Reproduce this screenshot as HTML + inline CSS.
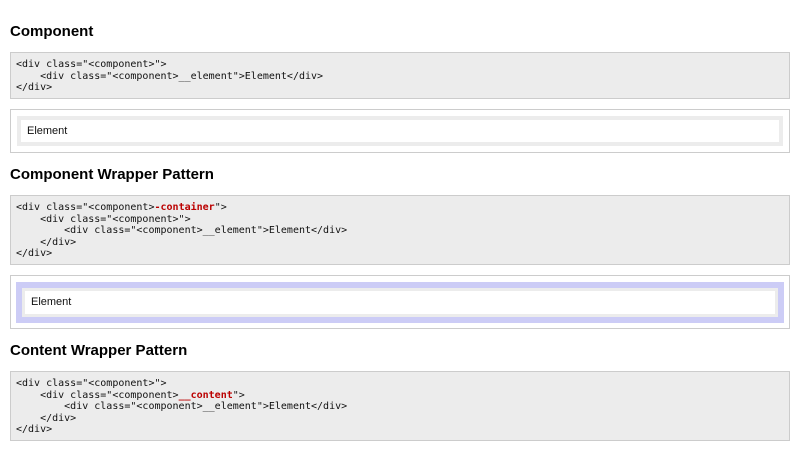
<!DOCTYPE html>
<html><head><style>
body{margin:0;background:#fff;width:800px;height:450px;position:relative;font-family:"Liberation Sans",sans-serif;overflow:hidden}
h2{position:absolute;left:10px;margin:0;font-size:15px;font-weight:bold;color:#000}
.code{position:absolute;left:10px;width:780px;background:#ececec;border:1px solid #ccc;font-family:"DejaVu Sans Mono",monospace;font-size:10px;line-height:11.5px;padding:6px 5px;box-sizing:border-box;white-space:pre;color:#111}
.code b{color:#b00;font-weight:bold}
.demo{position:absolute;left:10px;width:780px;border:1px solid #ccc;box-sizing:border-box}
.el{font-size:11px;color:#111}
</style></head><body>
<h2 style="top:23px">Component</h2>
<div class="code" style="top:52px;height:47px">&lt;div class="&lt;component&gt;"&gt;
    &lt;div class="&lt;component&gt;__element"&gt;Element&lt;/div&gt;
&lt;/div&gt;</div>
<div class="demo" style="top:109px;height:44px">
  <div style="position:absolute;left:6px;top:6px;right:6px;bottom:6px;border:4px solid #ececec;background:#fff"></div>
  <div class="el" style="position:absolute;left:16px;top:15px">Element</div>
</div>
<h2 style="top:166px">Component Wrapper Pattern</h2>
<div class="code" style="top:195px;height:70px">&lt;div class="&lt;component&gt;<b>-container</b>"&gt;
    &lt;div class="&lt;component&gt;"&gt;
        &lt;div class="&lt;component&gt;__element"&gt;Element&lt;/div&gt;
    &lt;/div&gt;
&lt;/div&gt;</div>
<div class="demo" style="top:275px;height:54px">
  <div style="position:absolute;left:5px;top:6px;right:5px;bottom:5px;border:6px solid #ccccf6;background:#ececec"></div>
  <div style="position:absolute;left:14px;top:15px;right:14px;bottom:14px;background:#fff"></div>
  <div class="el" style="position:absolute;left:20px;top:20px">Element</div>
</div>
<h2 style="top:342px">Content Wrapper Pattern</h2>
<div class="code" style="top:371px;height:70px">&lt;div class="&lt;component&gt;"&gt;
    &lt;div class="&lt;component&gt;<b>__content</b>"&gt;
        &lt;div class="&lt;component&gt;__element"&gt;Element&lt;/div&gt;
    &lt;/div&gt;
&lt;/div&gt;</div>
</body></html>
